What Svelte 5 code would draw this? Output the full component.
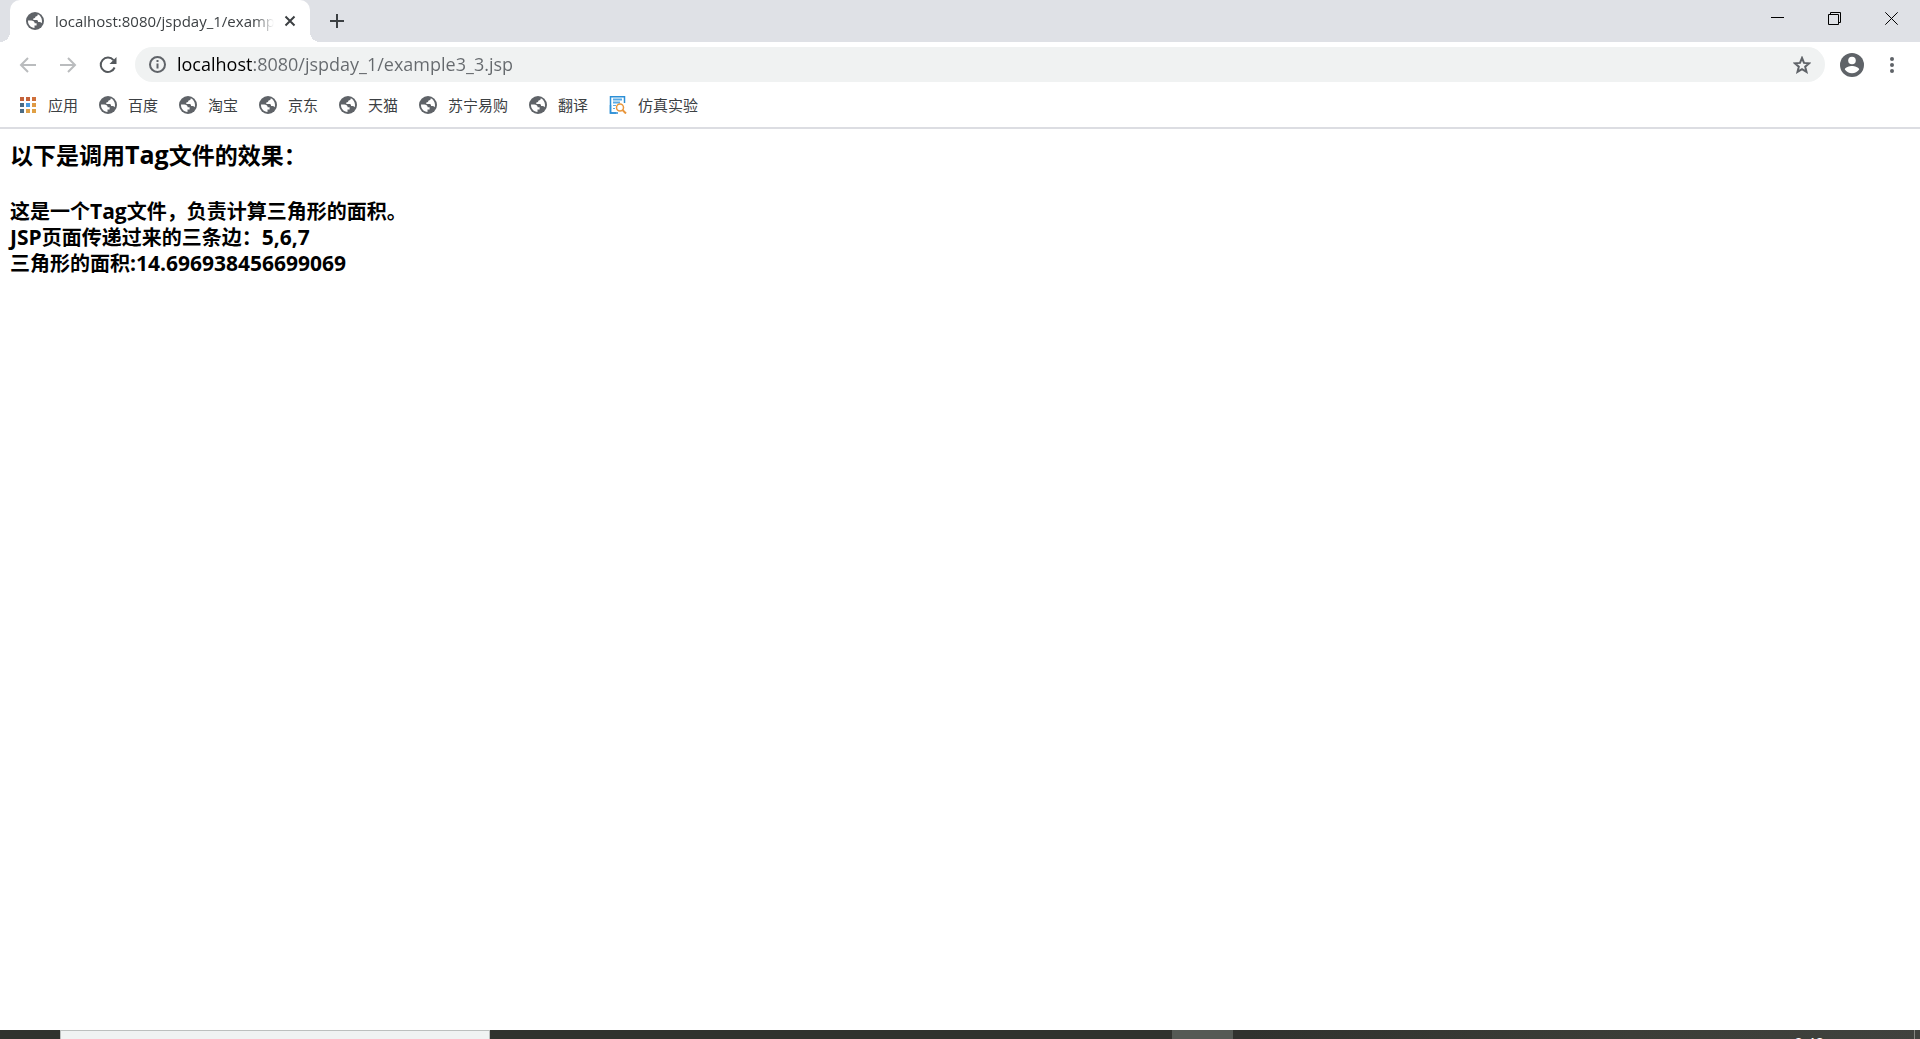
<script>
  let address = $state("localhost:8080/jspday_1/example3_3.jsp");

  const tabTitle = "localhost:8080/jspday_1/example3_3.jsp";

  const bookmarks = [
    { name: "应用", icon: "apps" },
    { name: "百度", icon: "globe" },
    { name: "淘宝", icon: "globe" },
    { name: "京东", icon: "globe" },
    { name: "天猫", icon: "globe" },
    { name: "苏宁易购", icon: "globe" },
    { name: "翻译", icon: "globe" },
    { name: "仿真实验", icon: "lab" },
  ];

  const appDots = [
    "#c4623a", "#c4623a", "#d0703a",
    "#4a6c86", "#4a9be0", "#e09a45",
    "#4a6c86", "#e0a045", "#e0a045",
  ];

  const sides = [5, 6, 7];
  const area = 14.696938456699069;
</script>

{#snippet globe()}
  <svg class="icon" width="18" height="18" viewBox="0 0 18 18" aria-hidden="true">
    <circle cx="9" cy="9" r="9" fill="#5f6368" />
    <path
      d="M11.8 2.3c-.2 1.5-.8 2.2-2.2 2.3-.3 1.3-.9 1.8-2.3 1.8v1.7h3.4c1 0 1.4.8 1.4 1.9h1.4c.9 0 1.5.4 2.1 1.2.3-.7.4-1.4.4-2.2 0-3-1.7-5.600-4.200-6.700z"
      fill="#fff"
    />
    <path
      d="M2 8.400h3.200c2 0 3.300 1 3.500 2.800h1.900v2.200H8.500v2.500C4.800 15.800 2 12.800 2 9z"
      fill="#fff"
    />
  </svg>
{/snippet}

<div class="browser">
  <header class="titlebar">
    <div class="tab">
      {@render globe()}
      <span class="tab__title">{tabTitle}</span>
      <button class="tab__close" aria-label="关闭标签页">
        <svg width="12" height="12" viewBox="0 0 12 12">
          <path d="M1.5 1.5l9 9M10.5 1.5l-9 9" stroke="#3c4043" stroke-width="2" />
        </svg>
      </button>
    </div>
    <button class="new-tab" aria-label="打开新的标签页">
      <svg width="16" height="16" viewBox="0 0 16 16">
        <path d="M8 1v14M1 8h14" stroke="#3c4043" stroke-width="2" />
      </svg>
    </button>
    <div class="window-controls">
      <button aria-label="最小化">
        <svg width="13" height="13" viewBox="0 0 13 13">
          <path d="M0 5.5h13" stroke="#000" />
        </svg>
      </button>
      <button aria-label="还原">
        <svg width="13" height="13" viewBox="0 0 13 13" fill="none" stroke="#000">
          <path d="M.5 2.5h10v10H.5zM2.5 2.5v-2h10v10h-2" />
        </svg>
      </button>
      <button aria-label="关闭">
        <svg width="13" height="13" viewBox="0 0 13 13">
          <path d="M.3.3l12.4 12.4M12.7.3L.3 12.7" stroke="#000" />
        </svg>
      </button>
    </div>
  </header>

  <div class="toolbar">
    <button class="tool" aria-label="后退">
      <svg width="18" height="18" viewBox="0 0 18 18" fill="none" stroke="#babcbe" stroke-width="2">
        <path d="M17 9H2.5M9 2L2 9l7 7" />
      </svg>
    </button>
    <button class="tool" aria-label="前进">
      <svg width="18" height="18" viewBox="0 0 18 18" fill="none" stroke="#babcbe" stroke-width="2">
        <path d="M1 9h14.5M9 2l7 7-7 7" />
      </svg>
    </button>
    <button class="tool" aria-label="重新加载">
      <svg width="18" height="18" viewBox="0 0 18 18">
        <path
          d="M15.6 11.5A7.2 7.2 0 1 1 14.5 4.2"
          fill="none"
          stroke="#54585c"
          stroke-width="2"
        />
        <path d="M17.5 1v7h-7z" fill="#54585c" />
      </svg>
    </button>
    <div class="omnibox">
      <svg class="icon" width="17" height="17" viewBox="0 0 17 17" aria-hidden="true">
        <circle cx="8.5" cy="8.5" r="7.5" fill="none" stroke="#5f6368" stroke-width="2" />
        <path d="M8.5 4v2M8.5 7.5v5" stroke="#5f6368" stroke-width="2" />
      </svg>
      <input type="text" aria-label="地址栏" spellcheck="false" bind:value={address} />
      <button class="star" aria-label="添加书签">
        <svg width="18" height="18" viewBox="0 0 18 18">
          <path
            d="M9 2l2 4.9 5.2.4-4 3.4 1.3 5.2L9 13.2l-4.5 2.7 1.3-5.2-4-3.4L7 6.9z"
            fill="none"
            stroke="#5f6368"
            stroke-width="2"
          />
        </svg>
      </button>
    </div>
    <button class="tool" aria-label="用户">
      <svg width="24" height="24" viewBox="0 0 24 24">
        <circle cx="12" cy="12" r="12" fill="#5f6368" />
        <circle cx="12" cy="7.5" r="3.8" fill="#fff" />
        <path
          d="M4.8 16.6c0-2.3 4.8-3.6 7.2-3.6s7.2 1.300 7.200 3.600c-1.600 2.300-4.300 3.700-7.200 3.700s-5.600-1.400-7.200-3.700z"
          fill="#fff"
        />
      </svg>
    </button>
    <button class="tool" aria-label="菜单">
      <svg width="4" height="16" viewBox="0 0 4 16" fill="#5f6368">
        <circle cx="2" cy="2" r="2" />
        <circle cx="2" cy="8" r="2" />
        <circle cx="2" cy="14" r="2" />
      </svg>
    </button>
  </div>

  <nav class="bookmarks">
    {#each bookmarks as bookmark (bookmark.name)}
      <a href="#top">
        {#if bookmark.icon === "apps"}
          <svg class="icon" width="18" height="18" viewBox="0 0 18 18" aria-hidden="true">
            {#each appDots as color, i}
              <rect x={(i % 3) * 6 + 1} y={Math.floor(i / 3) * 6 + 1} width="4" height="4" fill={color} />
            {/each}
          </svg>
        {:else if bookmark.icon === "lab"}
          <svg class="icon" width="18" height="18" viewBox="0 0 18 18" fill="none" aria-hidden="true">
            <path d="M7 17H1.5V.8h14V7" stroke="#2c8fd6" stroke-width="1.5" />
            <path d="M1.500 9v8H9" stroke="#2c8fd6" stroke-width="1.5" />
            <path d="M4 3.500h9M4 6.500h7" stroke="#5aabe6" stroke-width="2" />
            <path d="M4 9.500h3M4 12.500h2" stroke="#5aabe6" />
            <circle cx="11" cy="11.500" r="3.500" stroke="#e8963c" stroke-width="1.5" />
            <path d="M13.500 14l3.500 3.500" stroke="#e8963c" stroke-width="2" />
          </svg>
        {:else}
          {@render globe()}
        {/if}
        <span>{bookmark.name}</span>
      </a>
    {/each}
  </nav>

  <main class="page">
    <h3>以下是调用<span class="latin">Tag</span>文件的效果：</h3>
    <h4>
      这是一个<span class="latin">Tag</span>文件，负责计算三角形的面积。<br />
      <span class="latin">JSP</span>页面传递过来的三条边：<span class="latin">{sides.join(",")}</span><br />
      三角形的面积<span class="latin">:{area}</span>
    </h4>
  </main>

  <footer class="taskbar">
    <div class="taskbar__search"></div>
    <div class="taskbar__app"></div>
    <div class="taskbar__clock">9:40</div>
    <div class="taskbar__desktop"></div>
  </footer>
</div>

<style>
  :global(body) {
    margin: 0;
  }

  .browser {
    display: flex;
    flex-direction: column;
    height: 100vh;
    overflow: hidden;
    background: #fff;
    font-family: "Open Sans", "Noto Sans CJK SC", sans-serif;
  }

  button {
    display: flex;
    align-items: center;
    justify-content: center;
    padding: 0;
    border: 0;
    background: none;
  }

  .icon {
    flex-shrink: 0;
  }

  .titlebar {
    display: flex;
    flex-shrink: 0;
    height: 42px;
    padding-left: 10px;
    background: #dfe1e6;
  }

  .tab {
    position: relative;
    display: flex;
    align-items: center;
    box-sizing: border-box;
    width: 300px;
    padding: 0 14px 0 16px;
    border-radius: 10px 10px 0 0;
    background: #fff;
  }

  /* flared bottom corners of the active tab */
  .tab::before,
  .tab::after {
    content: "";
    position: absolute;
    bottom: 0;
    width: 10px;
    height: 10px;
  }

  .tab::before {
    right: 100%;
    background: radial-gradient(circle at 0 0, transparent 10px, #fff 10px);
  }

  .tab::after {
    left: 100%;
    background: radial-gradient(circle at 100% 0, transparent 10px, #fff 10px);
  }

  .tab__title {
    flex: 1;
    min-width: 0;
    margin: 0 10px 0 11px;
    overflow: hidden;
    white-space: nowrap;
    font-size: 15px;
    line-height: 22px;
    color: #3c4043;
    mask-image: linear-gradient(to right, #000 calc(100% - 20px), transparent);
  }

  .tab__close {
    width: 12px;
    height: 22px;
  }

  .new-tab {
    width: 36px;
    margin-left: 9px;
  }

  .window-controls {
    display: flex;
    height: 37px;
    margin-left: auto;
  }

  .window-controls button {
    width: 57px;
  }

  .toolbar {
    display: flex;
    flex-shrink: 0;
    align-items: center;
    height: 45px;
    padding: 0 8px;
  }

  .tool {
    width: 40px;
    height: 36px;
  }

  .omnibox {
    display: flex;
    flex: 1;
    align-items: center;
    height: 35px;
    margin: 0 7px;
    padding: 0 14px;
    border-radius: 18px;
    background: #f0f2f2;
  }

  .omnibox input {
    flex: 1;
    min-width: 0;
    height: 26px;
    margin-left: 11px;
    padding: 0 0 2px;
    border: 0;
    outline: 0;
    font: inherit;
    font-size: 18px;
    color: #65696d;
    /* the host part is darker than the rest of the address */
    background: linear-gradient(to right, #000 76px, #65696d 76px);
    background-clip: text;
    -webkit-text-fill-color: transparent;
  }

  .bookmarks {
    display: flex;
    flex-shrink: 0;
    align-items: center;
    gap: 21px;
    height: 36px;
    padding: 0 19px 4px;
    border-bottom: 2px solid #dcdde2;
  }

  .bookmarks a {
    display: flex;
    align-items: center;
    gap: 11px;
    font-size: 15px;
    line-height: 22px;
    color: #3c4043;
    text-decoration: none;
  }

  .page {
    flex: 1;
    padding: 10px;
    color: #000;
  }

  .page h3,
  .page h4 {
    margin: 0;
    font-weight: 700;
  }

  .page h3 {
    margin-bottom: 28px;
    font-size: 23px;
    line-height: 32px;
  }

  .page h4 {
    font-size: 20px;
    line-height: 26px;
  }

  .latin {
    line-height: 1;
  }

  h3 .latin {
    font-size: 25px;
  }

  h4 .latin {
    font-size: 21px;
  }

  .taskbar {
    display: flex;
    flex-shrink: 0;
    height: 9px;
    overflow: hidden;
    background: linear-gradient(to right, #30322e, #30322e 65%, #3c3e38 85%, #40423e);
  }

  .taskbar__search {
    box-sizing: border-box;
    width: 430px;
    margin-left: 60px;
    border: 1px solid #bcc0be;
    border-bottom: 0;
    background: #f0f3f2;
  }

  .taskbar__app {
    width: 61px;
    margin-left: 682px;
    background: #555a55;
  }

  .taskbar__clock {
    margin-left: auto;
    padding: 3px 90px 0 0;
    font-size: 15px;
    line-height: 18px;
    color: #fff;
  }

  .taskbar__desktop {
    width: 5px;
    border-left: 1px solid #858782;
  }
</style>
